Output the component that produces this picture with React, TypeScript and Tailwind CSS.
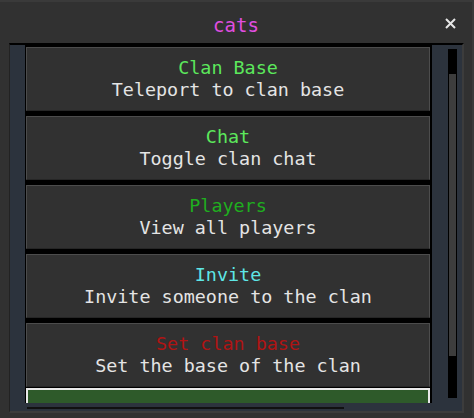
const items = [
  { title: "Clan Base", desc: "Teleport to clan base", color: "text-[#5ce85c]" },
  { title: "Chat", desc: "Toggle clan chat", color: "text-[#5ce85c]" },
  { title: "Players", desc: "View all players", color: "text-[#1fae1f]" },
  { title: "Invite", desc: "Invite someone to the clan", color: "text-[#5ee6e6]" },
  { title: "Set clan base", desc: "Set the base of the clan", color: "text-[#b01414]" },
];

function CloseIcon() {
  return (
    <svg width="11" height="11" viewBox="0 0 11 11" className="mt-[1px]">
      <path d="M1 1 L10 10 M10 1 L1 10" stroke="#e6e6e6" strokeWidth="2" />
    </svg>
  );
}

function MenuButton({ title, desc, color }: { title: string; desc: string; color: string }) {
  return (
    <div className="flex h-[64px] shrink-0 flex-col items-center justify-center border border-[#4c4c4c] border-b-[#262626] bg-[#313131] text-[18.4px] leading-[22px]">
      <span className={color}>{title}</span>
      <span className="text-[#e4e4e4]">{desc}</span>
    </div>
  );
}

export default function App() {
  return (
    <div
      className="flex h-[418px] w-[474px] flex-col overflow-hidden border-t-2 border-r-2 border-[#3a3a3a] bg-[#313131]"
      style={{ fontFamily: '"DejaVu Sans Mono", monospace' }}
    >
      <div className="grid h-[41px] shrink-0 grid-cols-[1fr_auto_1fr] items-center">
        <div />
        <span className="mt-[6px] text-[19px] text-[#e04ee0]">cats</span>
        <div className="flex justify-end pr-[16px]">
          <CloseIcon />
        </div>
      </div>

      <div className="ml-[9px] flex h-[370px] w-[455px] border-l border-[#222] border-t-2 border-t-black border-r-2 border-r-[#3c3c3c] border-b-2 border-b-[#3c3c3c] bg-[#2c333d]">
        <div className="w-[15px] shrink-0" />
        <div className="flex w-[407px] shrink-0 flex-col">
          <div className="flex h-[358px] flex-col overflow-hidden bg-black pl-[1px] pr-[2px] pt-[2px]">
            <div className="flex flex-col gap-[5px]">
              {items.map((it) => (
                <MenuButton key={it.title} {...it} />
              ))}
            </div>
            <div className="mt-[1px] h-[63px] shrink-0 border-2 border-b-0 border-[#e8e8e8] bg-[#2e5a2a]" />
          </div>
          <div className="ml-[2px] mt-[4px] h-[2px] w-[317px] bg-[#111]" />
        </div>
        <div className="flex-1 pl-[16px] pt-[4px]">
          <div className="flex h-[349px] w-[9px] flex-col bg-black">
            <div className="mt-[24px] h-[284px] border border-black bg-[#3d3d3d]" />
          </div>
        </div>
      </div>
    </div>
  );
}
